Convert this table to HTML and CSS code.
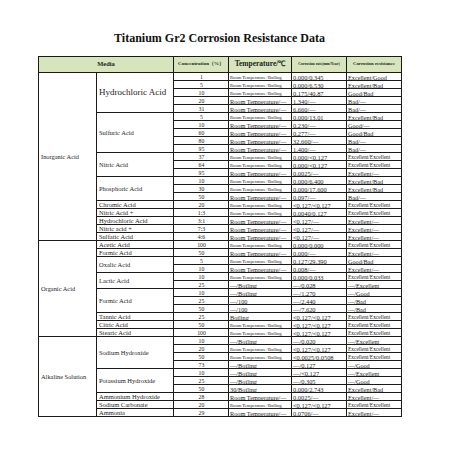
FILE: index.html
```html
<!DOCTYPE html>
<html>
<head>
<meta charset="utf-8">
<link rel="stylesheet" href="styles.css">
</head>
<body>
<div class="page">
  <h1 class="title">Titanium Gr2 Corrosion Resistance Data</h1>
  <table class="data">
    <colgroup>
      <col class="c-cat"><col class="c-sub"><col class="c-conc"><col class="c-temp"><col class="c-rate"><col class="c-res">
    </colgroup>
    <thead>
      <tr>
        <th colspan="2" class="h-media">Media</th>
        <th class="h-conc">Concentration（%）</th>
        <th class="h-temp">Temperature/℃</th>
        <th class="h-rate">Corrosion rate(mm/Year)</th>
        <th class="h-res">Corrosion resistance</th>
      </tr>
    </thead>
    <tbody>
      <tr><td rowspan="21" class="cat">Inorganic Acid</td><td rowspan="5" class="sub big">Hydrochloric Acid</td><td class="conc">1</td><td class="temp s">Room Temperature /Boiling</td><td class="rate">0.000/0.345</td><td class="res">Excellent/Good</td></tr>
      <tr><td class="conc">5</td><td class="temp s">Room Temperature /Boiling</td><td class="rate">0.000/6.530</td><td class="res">Excellent/Bad</td></tr>
      <tr><td class="conc">10</td><td class="temp s">Room Temperature /Boiling</td><td class="rate">0.175/40.87</td><td class="res">Good/Bad</td></tr>
      <tr><td class="conc">20</td><td class="temp">Room Temperature/—</td><td class="rate">1.340/—</td><td class="res">Bad/—</td></tr>
      <tr><td class="conc">31</td><td class="temp">Room Temperature/—</td><td class="rate">6.660/—</td><td class="res">Bad/—</td></tr>
      <tr><td rowspan="5" class="sub">Sulfuric Acid</td><td class="conc">5</td><td class="temp s">Room Temperature /Boiling</td><td class="rate">0.000/13.01</td><td class="res">Excellent/Bad</td></tr>
      <tr><td class="conc">10</td><td class="temp">Room Temperature/—</td><td class="rate">0.230/—</td><td class="res">Good/—</td></tr>
      <tr><td class="conc">60</td><td class="temp">Room Temperature/—</td><td class="rate">0.277/—</td><td class="res">Good/Bad</td></tr>
      <tr><td class="conc">80</td><td class="temp">Room Temperature/—</td><td class="rate">32.660/—</td><td class="res">Bad/—</td></tr>
      <tr><td class="conc">95</td><td class="temp">Room Temperature/—</td><td class="rate">1.400/—</td><td class="res">Bad/—</td></tr>
      <tr><td rowspan="3" class="sub">Nitric Acid</td><td class="conc">37</td><td class="temp s">Room Temperature /Boiling</td><td class="rate">0.000/&lt;0.127</td><td class="res s">Excellent/Excellent</td></tr>
      <tr><td class="conc">64</td><td class="temp s">Room Temperature /Boiling</td><td class="rate">0.000/&lt;0.127</td><td class="res s">Excellent/Excellent</td></tr>
      <tr><td class="conc">95</td><td class="temp">Room Temperature/—</td><td class="rate">0.0025/—</td><td class="res">Excellent/—</td></tr>
      <tr><td rowspan="3" class="sub">Phosphoric Acid</td><td class="conc">10</td><td class="temp s">Room Temperature /Boiling</td><td class="rate">0.000/6.400</td><td class="res">Excellent/Bad</td></tr>
      <tr><td class="conc">30</td><td class="temp s">Room Temperature /Boiling</td><td class="rate">0.000/17.600</td><td class="res">Excellent/Bad</td></tr>
      <tr><td class="conc">50</td><td class="temp">Room Temperature/—</td><td class="rate">0.097/—</td><td class="res">Bad/—</td></tr>
      <tr><td class="sub">Chromic Acid</td><td class="conc">20</td><td class="temp s">Room Temperature /Boiling</td><td class="rate">&lt;0.127/&lt;0.127</td><td class="res s">Excellent/Excellent</td></tr>
      <tr><td class="sub">Nitric Acid +</td><td class="conc">1:3</td><td class="temp s">Room Temperature /Boiling</td><td class="rate">0.0040/0.127</td><td class="res s">Excellent/Excellent</td></tr>
      <tr><td class="sub">Hydrochloric Acid</td><td class="conc">3:1</td><td class="temp">Room Temperature/—</td><td class="rate">&lt;0.127/—</td><td class="res">Excellent/—</td></tr>
      <tr><td class="sub">Nitric acid +</td><td class="conc">7:3</td><td class="temp">Room Temperature/—</td><td class="rate">&lt;0.127/—</td><td class="res">Excellent/—</td></tr>
      <tr><td class="sub">Sulfatic Acid</td><td class="conc">4:6</td><td class="temp">Room Temperature/—</td><td class="rate">&lt;0.127/—</td><td class="res">Excellent/—</td></tr>

      <tr><td rowspan="12" class="cat">Organic Acid</td><td class="sub">Acetic Acid</td><td class="conc">100</td><td class="temp s">Room Temperature /Boiling</td><td class="rate">0.000/0.000</td><td class="res s">Excellent/Excellent</td></tr>
      <tr><td class="sub">Formic Acid</td><td class="conc">50</td><td class="temp">Room Temperature/—</td><td class="rate">0.000/—</td><td class="res">Excellent/—</td></tr>
      <tr><td rowspan="2" class="sub">Oxalic Acid</td><td class="conc">5</td><td class="temp s">Room Temperature /Boiling</td><td class="rate">0.127/29.390</td><td class="res">Good/Bad</td></tr>
      <tr><td class="conc">10</td><td class="temp">Room Temperature/—</td><td class="rate">0.008/—</td><td class="res">Excellent/—</td></tr>
      <tr><td rowspan="2" class="sub">Lactic Acid</td><td class="conc">10</td><td class="temp s">Room Temperature /Boiling</td><td class="rate">0.000/0.033</td><td class="res s">Excellent/Excellent</td></tr>
      <tr><td class="conc">25</td><td class="temp">—/Boiling</td><td class="rate">—/0.028</td><td class="res">—/Excellent</td></tr>
      <tr><td rowspan="3" class="sub">Formic Acid</td><td class="conc">10</td><td class="temp">—/Boiling</td><td class="rate">—/1.270</td><td class="res">—/Good</td></tr>
      <tr><td class="conc">25</td><td class="temp">—/100</td><td class="rate">—/2.440</td><td class="res">—/Bad</td></tr>
      <tr><td class="conc">50</td><td class="temp">—/100</td><td class="rate">—/7.620</td><td class="res">—/Bad</td></tr>
      <tr><td class="sub">Tannic Acid</td><td class="conc">25</td><td class="temp">Boiling</td><td class="rate">&lt;0.127/&lt;0.127</td><td class="res s">Excellent/Excellent</td></tr>
      <tr><td class="sub">Citric Acid</td><td class="conc">50</td><td class="temp s">Room Temperature /Boiling</td><td class="rate">&lt;0.127/&lt;0.127</td><td class="res s">Excellent/Excellent</td></tr>
      <tr><td class="sub">Stearic Acid</td><td class="conc">100</td><td class="temp s">Room Temperature /Boiling</td><td class="rate">&lt;0.127/&lt;0.127</td><td class="res s">Excellent/Excellent</td></tr>

      <tr><td rowspan="10" class="cat">Alkaline Solution</td><td rowspan="4" class="sub">Sodium Hydroxide</td><td class="conc">10</td><td class="temp">—/Boiling</td><td class="rate">—/0.020</td><td class="res">—/Excellent</td></tr>
      <tr><td class="conc">20</td><td class="temp s">Room Temperature /Boiling</td><td class="rate">&lt;0.127/&lt;0.127</td><td class="res s">Excellent/Excellent</td></tr>
      <tr><td class="conc">50</td><td class="temp s">Room Temperature /Boiling</td><td class="rate">&lt;0.0025/0.0508</td><td class="res s">Excellent/Excellent</td></tr>
      <tr><td class="conc">73</td><td class="temp">—/Boiling</td><td class="rate">—/0.127</td><td class="res">—/Good</td></tr>
      <tr><td rowspan="3" class="sub">Potassium Hydroxide</td><td class="conc">10</td><td class="temp">—/Boiling</td><td class="rate">—/&lt;0.127</td><td class="res">—/Excellent</td></tr>
      <tr><td class="conc">25</td><td class="temp">—/Boiling</td><td class="rate">—/0.305</td><td class="res">—/Good</td></tr>
      <tr><td class="conc">50</td><td class="temp">30/Boiling</td><td class="rate">0.000/2.743</td><td class="res">Excellent/Bad</td></tr>
      <tr><td class="sub">Ammonium Hydroxide</td><td class="conc">28</td><td class="temp">Room Temperature/—</td><td class="rate">0.0025/—</td><td class="res">Excellent/—</td></tr>
      <tr><td class="sub">Sodium Carbonate</td><td class="conc">20</td><td class="temp s">Room Temperature /Boiling</td><td class="rate">&lt;0.127/&lt;0.127</td><td class="res s">Excellent/Excellent</td></tr>
      <tr><td class="sub">Ammonia</td><td class="conc">29</td><td class="temp">Room Temperature/—</td><td class="rate">0.0706/—</td><td class="res">Excellent/—</td></tr>
    </tbody>
  </table>
</div>
</body>
</html>
```
FILE: styles.css
```css
html, body {
  margin: 0;
  padding: 0;
  background: #ffffff;
}
.page {
  width: 363px;
  padding: 31px 0 0 38px;
  font-family: "Liberation Serif", "Times New Roman", serif;
  color: #1e1e1e;
}
.title {
  margin: 0 0 11px 0;
  font-size: 12px;
  line-height: 14px;
  font-weight: bold;
  text-align: center;
  color: #111;
}
.data {
  width: 363px;
  table-layout: fixed;
  border-collapse: collapse;
  border: 1.5px solid #1a1a1a;
}
.c-cat { width: 58px; }
.c-sub { width: 77px; }
.c-conc { width: 55px; }
.c-temp { width: 63px; }
.c-rate { width: 55px; }
.c-res { width: 55px; }

.data th {
  height: 14.5px;
  padding: 0;
  background: #d8e4bc;
  border: 1.5px solid #1a1a1a;
  font-weight: bold;
  text-align: center;
  vertical-align: middle;
  white-space: nowrap;
  overflow: hidden;
  line-height: 6px;
}
.h-media { font-size: 6.5px; }
.h-conc { font-size: 5px; }
.h-temp { font-size: 7.5px; }
.h-rate { font-size: 3.8px; }
.h-res { font-size: 4.8px; }

.data td {
  height: 7px;
  padding: 0 0 0 1px;
  border: 1px solid #1a1a1a;
  white-space: nowrap;
  overflow: hidden;
  line-height: 5px;
  font-size: 6.3px;
  vertical-align: bottom;
  text-align: left;
}
.data td.cat {
  vertical-align: middle;
  font-size: 6.4px;
  padding-left: 2px;
}
.data td.sub {
  vertical-align: middle;
  font-size: 6.5px;
  padding-left: 2px;
}
.data td.sub.big {
  font-size: 9px;
  line-height: 8px;
}
.data td.conc {
  text-align: center;
  font-size: 5.8px;
}
.data td.temp { font-size: 6.3px; }
.data td.temp.s { font-size: 4.6px; }
.data td.rate { font-size: 6.4px; }
.data td.res { font-size: 6.2px; }
.data td.res.s { font-size: 5.4px; }
```
